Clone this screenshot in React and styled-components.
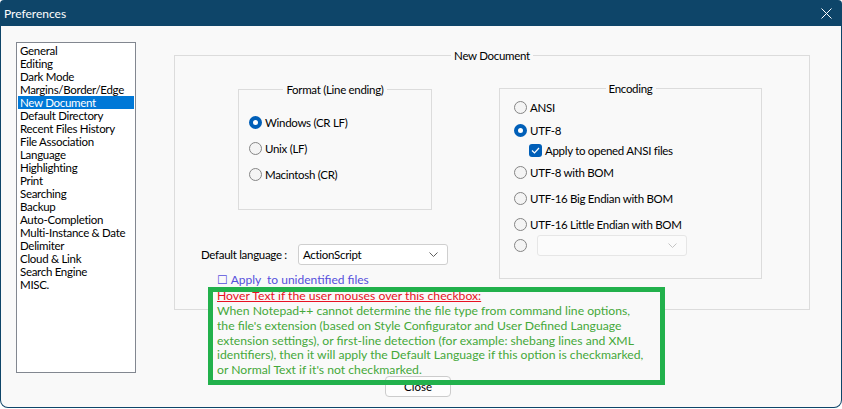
import React from "react";
import styled, { createGlobalStyle } from "styled-components";

const pages = [
  "General",
  "Editing",
  "Dark Mode",
  "Margins/Border/Edge",
  "New Document",
  "Default Directory",
  "Recent Files History",
  "File Association",
  "Language",
  "Highlighting",
  "Print",
  "Searching",
  "Backup",
  "Auto-Completion",
  "Multi-Instance & Date",
  "Delimiter",
  "Cloud & Link",
  "Search Engine",
  "MISC.",
];

const noteLines = [
  "When Notepad++ cannot determine the file type from command line options,",
  "the file's extension (based on Style Configurator and User Defined Language",
  "extension settings), or first-line detection (for example: shebang lines and XML",
  "identifiers), then it will apply the Default Language if this option is checkmarked,",
  "or Normal Text if it's not checkmarked.",
];

function Chevron({ color }) {
  return (
    <svg width="9" height="5" viewBox="0 0 9 5">
      <polyline points="0.5,0.5 4.5,4.5 8.5,0.5" fill="none" stroke={color} strokeWidth="1" />
    </svg>
  );
}

function Group({ title, w, h, m, row, pad, children }) {
  return (
    <GroupBox $w={w} $h={h} $m={m}>
      <GroupHead>
        <GroupTitle>{title}</GroupTitle>
      </GroupHead>
      <GroupBody $row={row} $pad={pad}>
        {children}
      </GroupBody>
    </GroupBox>
  );
}

function Option({ on, label, gap, children }) {
  return (
    <OptionRow $gap={gap}>
      <Radio $on={on} />
      {label && <span>{label}</span>}
      {children}
    </OptionRow>
  );
}

export default function App() {
  return (
    <>
      <GlobalStyle />
      <Window>
        <TitleBar>
          <span>Preferences</span>
          <svg width="11" height="11" viewBox="0 0 11 11">
            <path d="M0.5 0.5 L10.5 10.5 M10.5 0.5 L0.5 10.5" stroke="#fff" strokeWidth="1" />
          </svg>
        </TitleBar>
        <Body>
          <Content>
            <PageList>
              {pages.map((p) => (
                <PageItem key={p} $active={p === "New Document"}>
                  {p}
                </PageItem>
              ))}
            </PageList>
            <Main>
              <Group title="New Document" w={636} h={262} row pad="18px 47px 0 26px">
                <LeftColumn>
                  <Group title="Format (Line ending)" w={194} h={128} m="1px 0 0 37px" pad="17px 0 0 10px">
                    <Option on label="Windows (CR LF)" />
                    <Option label="Unix (LF)" gap={10} />
                    <Option label="Macintosh (CR)" gap={10} />
                  </Group>
                  <LangRow>
                    <LangLabel>Default language :</LangLabel>
                    <Combo>
                      <span>ActionScript</span>
                      <Chevron color="#606060" />
                    </Combo>
                  </LangRow>
                  <ApplyLink>{"☐ Apply  to unidentified files"}</ApplyLink>
                </LeftColumn>
                <Group title="Encoding" w={263} h={198} m="0 0 0 auto" pad="3px 0 0 14px">
                  <Option label="ANSI" />
                  <Option on label="UTF-8" gap={7} />
                  <CheckRow>
                    <CheckBox>
                      <svg width="9" height="7" viewBox="0 0 9 7">
                        <polyline points="1,3.5 3.5,6 8,1" fill="none" stroke="#fff" strokeWidth="1.2" />
                      </svg>
                    </CheckBox>
                    <span>Apply to opened ANSI files</span>
                  </CheckRow>
                  <Option label="UTF-8 with BOM" gap={6} />
                  <Option label="UTF-16 Big Endian with BOM" gap={10} />
                  <Option label="UTF-16 Little Endian with BOM" gap={10} />
                  <Option gap={5}>
                    <Combo $disabled>
                      <span />
                      <Chevron color="#c4c4c4" />
                    </Combo>
                  </Option>
                </Group>
              </Group>
            </Main>
          </Content>
          <Footer>
            <CloseButton>Close</CloseButton>
          </Footer>
          <HoverNote>
            <NoteHeading>Hover Text if the user mouses over this checkbox:</NoteHeading>
            {noteLines.map((l) => (
              <NoteLine key={l}>{l}</NoteLine>
            ))}
          </HoverNote>
        </Body>
      </Window>
    </>
  );
}

const GlobalStyle = createGlobalStyle`
  html, body {
    margin: 0;
    padding: 0;
    background: #ffffff;
  }
  body {
    font-family: Lato, "Noto Sans", sans-serif;
    font-size: 11.5px;
    letter-spacing: -0.3px;
    color: #000;
  }
`;

const Window = styled.div`
  width: 842px;
  height: 408px;
  display: flex;
  flex-direction: column;
  background: #0e4569;
  border-radius: 4px 4px 8px 8px;
  overflow: hidden;
`;

const TitleBar = styled.div`
  height: 26px;
  flex: none;
  display: flex;
  align-items: center;
  justify-content: space-between;
  padding: 0 10px 0 4px;
  color: #fff;
  font-size: 12px;
  letter-spacing: 0;
`;

const Body = styled.div`
  flex: 1;
  position: relative;
  margin: 0 1px 1px;
  padding: 16px 0 0 15px;
  background: #f9f9f9;
  border-radius: 0 0 7px 7px;
`;

const Content = styled.div`
  display: flex;
  align-items: flex-start;
`;

const PageList = styled.div`
  width: 120px;
  height: 331px;
  box-sizing: border-box;
  flex: none;
  padding: 1px;
  background: #fff;
  border: 1px solid #828790;
`;

const PageItem = styled.div`
  height: 13px;
  line-height: 13px;
  padding-left: 2px;
  white-space: nowrap;
  background: ${(p) => (p.$active ? "#0078d7" : "transparent")};
  color: ${(p) => (p.$active ? "#fff" : "#000")};
`;

const Main = styled.div`
  margin: 6px 0 0 38px;
`;

const GroupBox = styled.div`
  display: flex;
  flex-direction: column;
  flex: none;
  width: ${(p) => p.$w}px;
  height: ${(p) => p.$h}px;
  margin: ${(p) => p.$m || 0};
  box-sizing: border-box;
`;

const GroupHead = styled.div`
  display: flex;
  flex: none;
  height: 15px;
  line-height: 15px;

  &::before,
  &::after {
    content: "";
    flex: 1;
    height: 8px;
    box-sizing: border-box;
    align-self: flex-end;
    border-top: 1px solid #dcdcdc;
  }
  &::before {
    border-left: 1px solid #dcdcdc;
  }
  &::after {
    border-right: 1px solid #dcdcdc;
  }
`;

const GroupTitle = styled.span`
  padding: 0 3px;
  white-space: nowrap;
`;

const GroupBody = styled.div`
  flex: 1;
  display: flex;
  flex-direction: ${(p) => (p.$row ? "row" : "column")};
  align-items: flex-start;
  padding: ${(p) => p.$pad || 0};
  border: 1px solid #dcdcdc;
  border-top: none;
`;

const LeftColumn = styled.div`
  display: flex;
  flex-direction: column;
  flex: none;
`;

const OptionRow = styled.div`
  display: flex;
  align-items: center;
  gap: 3px;
  height: 16px;
  margin-top: ${(p) => p.$gap || 0}px;
  white-space: nowrap;
`;

const Radio = styled.span`
  width: 13px;
  height: 13px;
  flex: none;
  box-sizing: border-box;
  border-radius: 50%;
  border: ${(p) => (p.$on ? "4.5px solid #005fb8" : "1px solid #858585")};
  background: ${(p) => (p.$on ? "#fff" : "#f4f4f4")};
`;

const CheckRow = styled.div`
  display: flex;
  align-items: center;
  gap: 3px;
  height: 16px;
  margin: 4px 0 0 15px;
  white-space: nowrap;
`;

const CheckBox = styled.span`
  width: 13px;
  height: 13px;
  flex: none;
  border-radius: 3px;
  background: #005fb8;
  display: flex;
  align-items: center;
  justify-content: center;
`;

const LangRow = styled.div`
  display: flex;
  align-items: center;
  margin-top: 34px;
`;

const LangLabel = styled.span`
  width: 97px;
  white-space: nowrap;
`;

const Combo = styled.div`
  width: 150px;
  height: 21px;
  box-sizing: border-box;
  display: flex;
  align-items: center;
  justify-content: space-between;
  padding: 0 9px 0 4px;
  margin-left: ${(p) => (p.$disabled ? 7 : 0)}px;
  background: ${(p) => (p.$disabled ? "#fbfbfb" : "#fff")};
  border: 1px solid ${(p) => (p.$disabled ? "#e6e6e6" : "#cfcfcf")};
  border-radius: 3px;
`;

const ApplyLink = styled.span`
  margin: 7px 0 0 16px;
  line-height: 15px;
  white-space: pre;
  font-size: 12px;
  letter-spacing: 0;
  color: #5650dc;
`;

const Footer = styled.div`
  display: flex;
  margin-top: 3px;
  padding-left: 369px;
`;

const CloseButton = styled.button`
  position: relative;
  z-index: 2;
  width: 66px;
  height: 21px;
  padding: 0;
  font: inherit;
  color: #000;
  background: #fdfdfd;
  border: 1px solid #cccccc;
  border-radius: 4px;
`;

const HoverNote = styled.div`
  position: absolute;
  left: 207px;
  top: 261px;
  width: 457px;
  height: 98px;
  box-sizing: border-box;
  padding: 0 0 0 9px;
  background: #f9f9f9;
  font-size: 12.2px;
  letter-spacing: 0;
  white-space: nowrap;

  &::after {
    content: "";
    position: absolute;
    inset: 0;
    z-index: 3;
    border: 5px solid #22b14c;
  }
`;

const NoteHeading = styled.div`
  margin-top: 1px;
  line-height: 16px;
  color: #e81123;
  text-decoration: underline;
`;

const NoteLine = styled.div`
  line-height: 14.75px;
  color: #45a83a;
`;
